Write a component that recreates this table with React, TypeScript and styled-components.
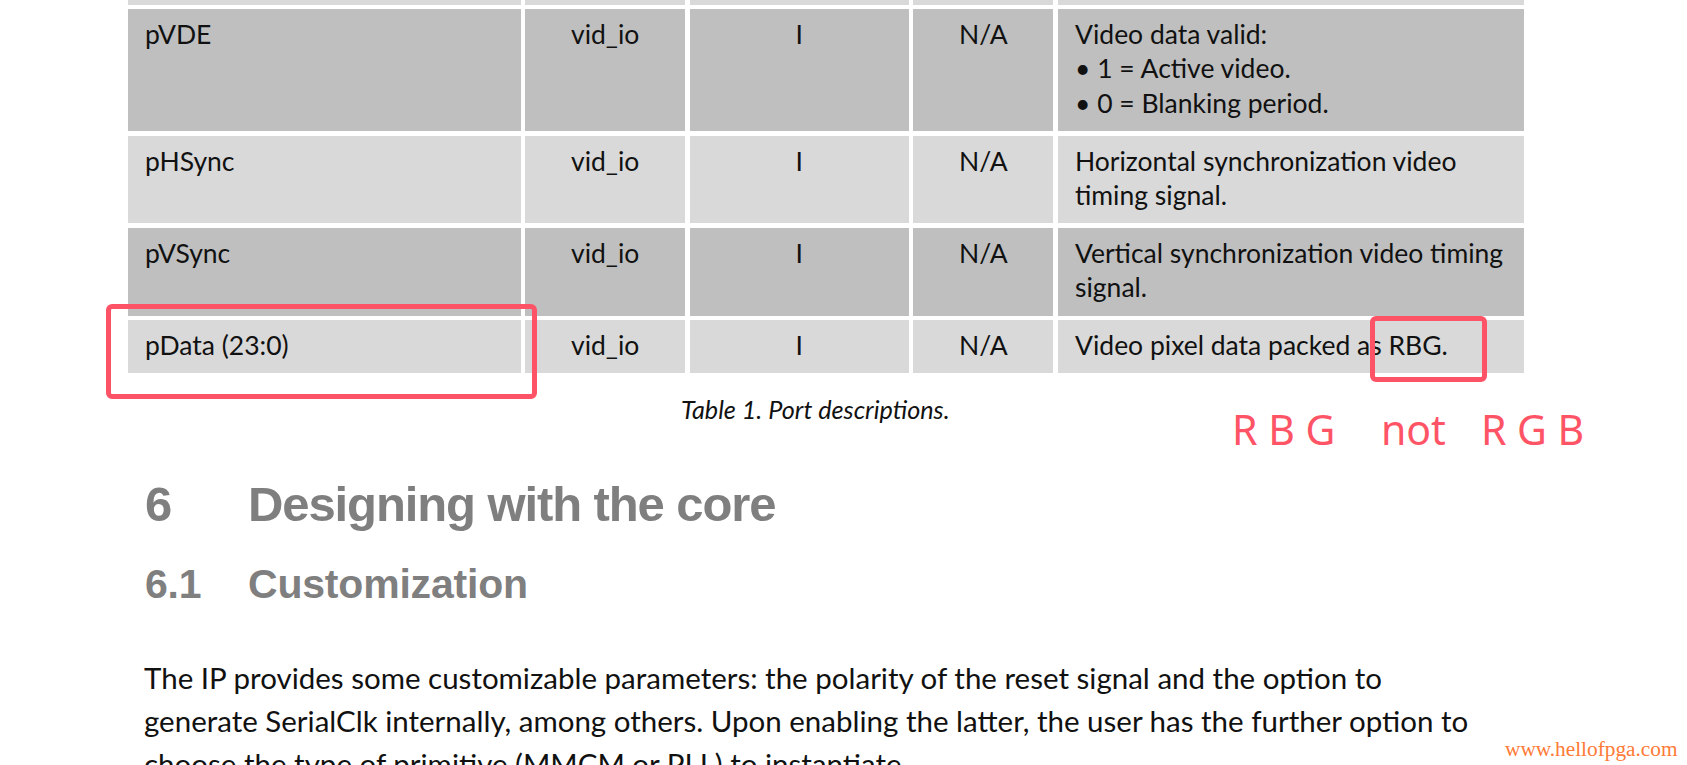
import { FC, Fragment, ReactNode } from 'react';
import styled, { createGlobalStyle } from 'styled-components';

type Tone = 'dark' | 'light';
type Align = 'left' | 'center';

interface PortRow {
    name: string;
    iface: string;
    dir: string;
    def: string;
    desc: ReactNode;
    tone: Tone;
}

const ports: PortRow[] = [
    {
        name: 'pVDE',
        iface: 'vid_io',
        dir: 'I',
        def: 'N/A',
        tone: 'dark',
        desc: (
            <>
                Video data valid:
                <br />• 1 = Active video.
                <br />• 0 = Blanking period.
            </>
        ),
    },
    {
        name: 'pHSync',
        iface: 'vid_io',
        dir: 'I',
        def: 'N/A',
        tone: 'light',
        desc: (
            <>
                Horizontal synchronization video
                <br />
                timing signal.
            </>
        ),
    },
    {
        name: 'pVSync',
        iface: 'vid_io',
        dir: 'I',
        def: 'N/A',
        tone: 'dark',
        desc: (
            <>
                Vertical synchronization video timing
                <br />
                signal.
            </>
        ),
    },
    {
        name: 'pData (23:0)',
        iface: 'vid_io',
        dir: 'I',
        def: 'N/A',
        tone: 'light',
        desc: 'Video pixel data packed as RBG.',
    },
];

const GlobalStyle = createGlobalStyle`
    html, body {
        margin: 0;
        padding: 0;
        background: #ffffff;
    }
`;

const Page = styled.div`
    position: relative;
    width: 1687px;
    height: 765px;
    overflow: hidden;
    background: #ffffff;
    padding-left: 128px;
    box-sizing: border-box;
    font-family: Lato, 'Open Sans', sans-serif;
    color: #111111;
`;

const Table = styled.div`
    display: grid;
    grid-template-columns: 392.7px 160px 219px 140.3px 466px;
    column-gap: 4.5px;
    row-gap: 4.4px;
    width: 1396px;
`;

const Cell = styled.div<{ $tone: Tone; $align?: Align; $clip?: boolean }>`
    background: ${({ $tone }) => ($tone === 'dark' ? '#bfbfbf' : '#d9d9d9')};
    text-align: ${({ $align }) => $align || 'left'};
    padding: ${({ $clip }) => ($clip ? '0' : '8px 17px 11px 17px')};
    height: ${({ $clip }) => ($clip ? '4.6px' : 'auto')};
    font-size: 26.5px;
    line-height: 34.4px;
    white-space: nowrap;
`;

const Caption = styled.div`
    margin-top: 20.2px;
    padding-left: 553px;
    font-style: italic;
    font-size: 25.2px;
    line-height: 30px;
`;

const Heading = styled.h2<{ $size: number; $top: number }>`
    display: grid;
    grid-template-columns: 103px auto;
    margin: ${({ $top }) => $top}px 0 0 17px;
    font-family: 'Liberation Sans', Arial, sans-serif;
    font-weight: 700;
    font-size: ${({ $size }) => $size}px;
    line-height: ${({ $size }) => $size}px;
    letter-spacing: ${({ $size }) => ($size > 45 ? '-1.1px' : '-0.2px')};
    color: #7f7f7f;
`;

const Body = styled.p`
    margin: 50.3px 0 0 16px;
    font-size: 29.5px;
    line-height: 43px;
    white-space: nowrap;
`;

const Mark = styled.div<{ $left: number; $top: number; $w: number; $h: number }>`
    position: absolute;
    left: ${({ $left }) => $left}px;
    top: ${({ $top }) => $top}px;
    width: ${({ $w }) => $w}px;
    height: ${({ $h }) => $h}px;
    box-sizing: border-box;
    border: 5px solid #fe5367;
    border-radius: 6px;
`;

const Note = styled.div`
    position: absolute;
    left: 1232px;
    top: 408.6px;
    display: flex;
    font-family: 'Noto Sans', sans-serif;
    font-size: 41px;
    line-height: 41px;
    color: #ff5466;
    white-space: pre;
`;

const NoteWord = styled.span<{ $gap: number }>`
    margin-left: ${({ $gap }) => $gap}px;
`;

const Watermark = styled.div`
    position: absolute;
    left: 1505px;
    top: 739.2px;
    font-family: 'Liberation Serif', 'Times New Roman', serif;
    font-size: 21.3px;
    line-height: 21px;
    color: #ff7a36;
`;

const PortTable: FC = () => (
    <Table>
        {[0, 1, 2, 3, 4].map((i) => (
            <Cell key={`top-${i}`} $tone="light" $clip />
        ))}
        {ports.map((p) => (
            <Fragment key={p.name}>
                <Cell $tone={p.tone}>{p.name}</Cell>
                <Cell $tone={p.tone} $align="center">
                    {p.iface}
                </Cell>
                <Cell $tone={p.tone} $align="center">
                    {p.dir}
                </Cell>
                <Cell $tone={p.tone} $align="center">
                    {p.def}
                </Cell>
                <Cell $tone={p.tone}>{p.desc}</Cell>
            </Fragment>
        ))}
    </Table>
);

const App: FC = () => (
    <>
        <GlobalStyle />
        <Page>
            <PortTable />
            <Caption>Table 1. Port descriptions.</Caption>
            <Heading $size={49} $top={56.9}>
                <span>6</span>
                <span>Designing with the core</span>
            </Heading>
            <Heading $size={41} $top={34.8}>
                <span>6.1</span>
                <span>Customization</span>
            </Heading>
            <Body>
                The IP provides some customizable parameters: the polarity of the reset signal and the option to
                <br />
                generate SerialClk internally, among others. Upon enabling the latter, the user has the further option to
                <br />
                choose the type of primitive (MMCM or PLL) to instantiate.
            </Body>

            <Mark $left={106} $top={304} $w={431} $h={95} />
            <Mark $left={1370} $top={316} $w={117} $h={66} />
            <Note>
                <NoteWord $gap={0}>R B G</NoteWord>
                <NoteWord $gap={45.6}>not</NoteWord>
                <NoteWord $gap={35}>R G B</NoteWord>
            </Note>
            <Watermark>www.hellofpga.com</Watermark>
        </Page>
    </>
);

export default App;
